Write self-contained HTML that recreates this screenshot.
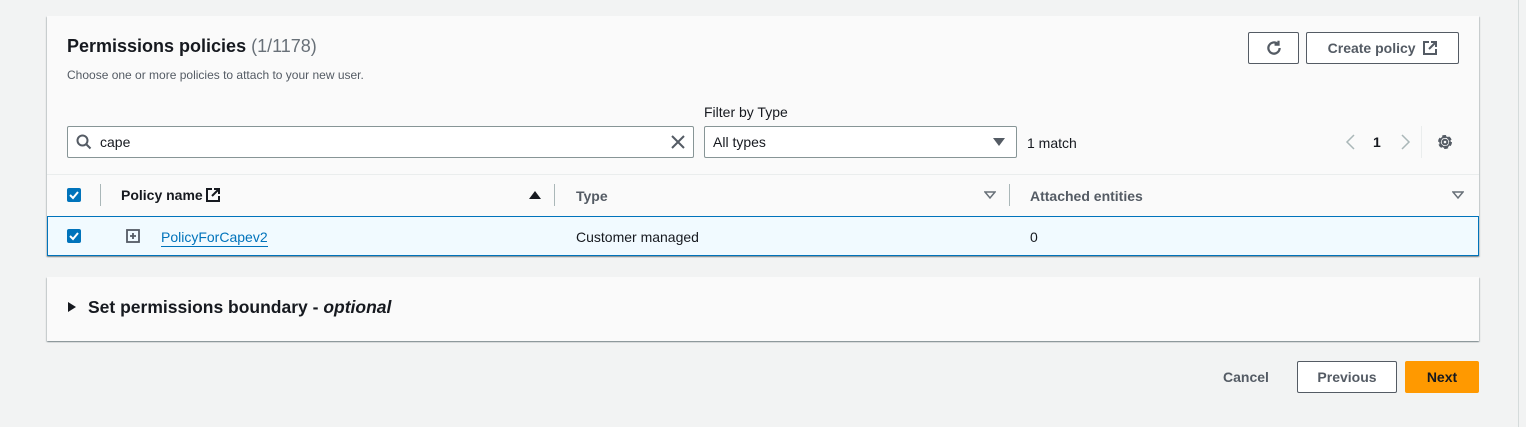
<!DOCTYPE html>
<html><head><style>
body{margin:0;width:1526px;height:427px;background:#f2f3f3;font-family:"Liberation Sans",sans-serif;color:#16191f;position:relative;overflow:hidden}
.a{position:absolute}
.panel{background:#fafafa;box-shadow:0 1px 1px rgba(0,28,36,.3),1px 1px 1px rgba(0,28,36,.15),-1px 1px 1px rgba(0,28,36,.15)}
.btn{border:1px solid #545b64;border-radius:2px;background:#fff;box-sizing:border-box;font-weight:bold;font-size:14px;color:#545b64;display:flex;align-items:center;justify-content:center}
.cb{width:14px;height:14px;background:#0073bb;border-radius:2px}
.th{font-weight:bold;font-size:14px;color:#545b64}
.sep{width:1px;height:22px;background:#aab7b8}
</style></head><body>
<div class="a" style="left:1518px;top:0;width:1px;height:427px;background:#d5dbdb"></div>
<div class="a panel" style="left:47px;top:16px;width:1432px;height:240px"></div>
<div class="a" style="left:67px;top:36px;font-size:18px;font-weight:bold">Permissions policies <span style="font-weight:normal;color:#687078">(1/1178)</span></div>
<div class="a" style="left:67px;top:68px;font-size:12px;color:#545b64">Choose one or more policies to attach to your new user.</div>
<div class="a btn" style="left:1248px;top:32px;width:51px;height:32px"><svg width="18" height="18" viewBox="0 0 16 16" fill="none" stroke="#545b64" stroke-width="2"><path d="M13 8a5 5 0 1 1-1.8-3.8"/><path d="M12 1.5v3.5H8.5"/></svg></div>
<div class="a btn" style="left:1306px;top:32px;width:153px;height:32px">Create policy&nbsp;&nbsp;<svg width="14" height="14" viewBox="0 0 14 14" fill="none" stroke="#545b64" stroke-width="2"><path d="M6 1H1v12h12V8M8 1h5v5M13 1L6 8"/></svg></div>
<div class="a" style="left:704px;top:104px;font-size:14px">Filter by Type</div>
<div class="a" style="left:67px;top:126px;width:627px;height:32px;box-sizing:border-box;border:1px solid #879596;border-radius:2px;background:#fff"></div>
<svg class="a" style="left:76px;top:134px" width="16" height="16" viewBox="0 0 16 16" fill="none" stroke="#545b64" stroke-width="2"><circle cx="6.5" cy="6.5" r="5"/><path d="M10.5 10.5l4 4"/></svg>
<div class="a" style="left:100px;top:134px;font-size:14px">cape</div>
<svg class="a" style="left:670px;top:134px" width="16" height="16" viewBox="0 0 16 16" stroke="#545b64" stroke-width="2"><path d="M2 2l12 12M14 2L2 14"/></svg>
<div class="a" style="left:704px;top:126px;width:313px;height:32px;box-sizing:border-box;border:1px solid #879596;border-radius:2px;background:#fff"></div>
<div class="a" style="left:713px;top:134px;font-size:14px">All types</div>
<svg class="a" style="left:993px;top:137px" width="12" height="10"><path d="M0 1h12L6 9z" fill="#545b64"/></svg>
<div class="a" style="left:1027px;top:135px;font-size:14px">1 match</div>
<svg class="a" style="left:1344px;top:134px" width="12" height="16" fill="none" stroke="#aab7b8" stroke-width="1.5"><path d="M10 1L3 8l7 7"/></svg>
<div class="a" style="left:1373px;top:134px;font-size:14px;font-weight:bold">1</div>
<svg class="a" style="left:1400px;top:134px" width="12" height="16" fill="none" stroke="#aab7b8" stroke-width="1.5"><path d="M2 1l7 7-7 7"/></svg>
<div class="a" style="left:1421px;top:126px;width:1px;height:32px;background:#eaeded"></div>
<svg class="a" style="left:1437px;top:134px" width="16" height="16" viewBox="0 0 16 16" fill="none" stroke="#545b64" stroke-width="2"><circle cx="8" cy="8" r="2.3"/><circle cx="8" cy="8" r="5.5" stroke-width="3" stroke-dasharray="3.5 2.3"/><circle cx="8" cy="8" r="5" stroke-width="1.5"/></svg>
<div class="a" style="left:47px;top:174px;width:1432px;height:1px;background:#eaeded"></div>
<div class="a cb" style="left:67px;top:188px"></div>
<svg class="a" style="left:67px;top:188px" width="14" height="14" fill="none" stroke="#fff" stroke-width="2"><path d="M3 7l3 3 5-6"/></svg>
<div class="a sep" style="left:100px;top:184px"></div>
<div class="a th" style="left:121px;top:187px;color:#16191f">Policy name</div>
<svg class="a" style="left:206px;top:188px" width="14" height="14" viewBox="0 0 14 14" fill="none" stroke="#16191f" stroke-width="2"><path d="M6 1H1v12h12V8M8 1h5v5M13 1L6 8"/></svg>
<svg class="a" style="left:529px;top:190px" width="12" height="10"><path d="M0 9h12L6 1z" fill="#16191f"/></svg>
<div class="a sep" style="left:554px;top:184px"></div>
<div class="a th" style="left:576px;top:188px">Type</div>
<svg class="a" style="left:984px;top:190px" width="12" height="10"><path d="M1 2h10L6 8z" fill="none" stroke="#687078" stroke-width="1.5"/></svg>
<div class="a sep" style="left:1009px;top:184px"></div>
<div class="a th" style="left:1030px;top:188px">Attached entities</div>
<svg class="a" style="left:1452px;top:190px" width="12" height="10"><path d="M1 2h10L6 8z" fill="none" stroke="#687078" stroke-width="1.5"/></svg>
<div class="a" style="left:47px;top:216px;width:1432px;height:40px;box-sizing:border-box;border:1px solid #0073bb;background:#f1faff"></div>
<div class="a cb" style="left:67px;top:229px"></div>
<svg class="a" style="left:67px;top:229px" width="14" height="14" fill="none" stroke="#fff" stroke-width="2"><path d="M3 7l3 3 5-6"/></svg>
<svg class="a" style="left:126px;top:229px" width="14" height="14" fill="none" stroke="#545b64" stroke-width="1.8"><rect x="1" y="1" width="12" height="12"/><path d="M7 4v6M4 7h6"/></svg>
<div class="a" style="left:161px;top:229px;font-size:14px;color:#0073bb;border-bottom:1px solid #0073bb;line-height:17px">PolicyForCapev2</div>
<div class="a" style="left:576px;top:229px;font-size:14px">Customer managed</div>
<div class="a" style="left:1030px;top:229px;font-size:14px">0</div>
<div class="a panel" style="left:47px;top:277px;width:1432px;height:64px"></div>
<svg class="a" style="left:68px;top:302px" width="8" height="10"><path d="M0 0l8 5-8 5z" fill="#16191f"/></svg>
<div class="a" style="left:88px;top:297px;font-size:17.5px;font-weight:bold">Set permissions boundary - <i>optional</i></div>
<div class="a" style="left:1223px;top:369px;font-size:14px;font-weight:bold;color:#545b64">Cancel</div>
<div class="a btn" style="left:1297px;top:361px;width:100px;height:32px">Previous</div>
<div class="a btn" style="left:1405px;top:361px;width:74px;height:32px;background:#ff9900;border-color:#ff9900;color:#16191f">Next</div>
</body></html>
